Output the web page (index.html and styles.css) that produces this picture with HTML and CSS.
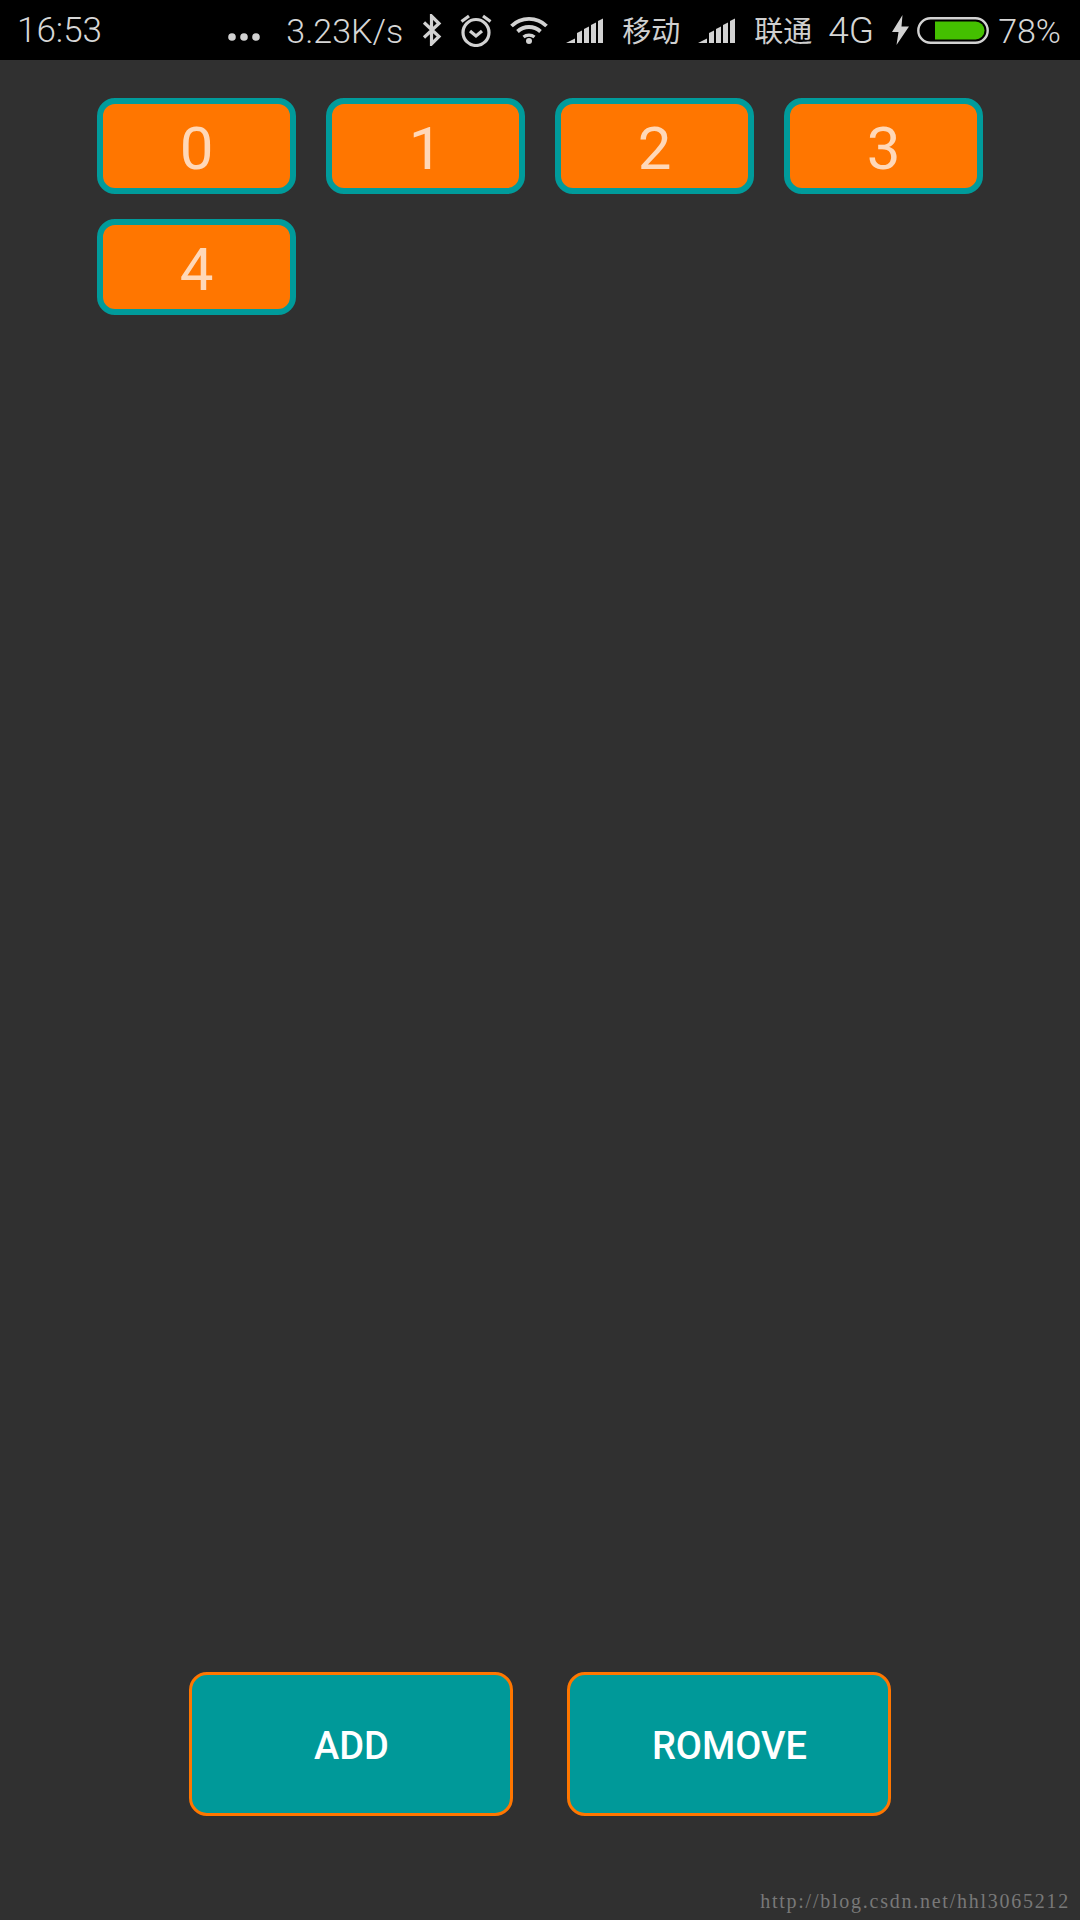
FILE: index.html
```html
<!DOCTYPE html>
<html lang="en">
<head>
    <meta charset="UTF-8">
    <meta name="viewport" content="width=device-width, initial-scale=1.0">
    <title>Flow Layout</title>
    <link rel="stylesheet" href="styles.css">
</head>
<body>

    <div id="appContainer">
        <!-- Status bar -->
        <div class="status-bar">
            <span class="status-text time">16:53</span>
            <div class="status-right">
                <svg class="icon dots" width="32" height="10" viewBox="0 0 32 10"><circle cx="4" cy="5" r="3.8"/><circle cx="16" cy="5" r="3.8"/><circle cx="28" cy="5" r="3.8"/></svg>
                <span class="status-text speed">3.23K/s</span>
                <svg class="icon bluetooth" width="20" height="32" viewBox="0 0 20 32"><path d="M2 8.5 L17 22.5 L9.5 30 V2 L17 9.5 L2 23.5" class="line"/></svg>
                <svg class="icon alarm" width="32" height="33" viewBox="0 0 32 33"><circle cx="16" cy="18.5" r="13" class="line"/><path d="M10 17 L16 22 L22 17" class="line"/><path d="M1.5 7.5 L9 2" class="line"/><path d="M30.5 7.5 L23 2" class="line"/></svg>
                <svg class="icon wifi" width="38" height="28" viewBox="0 0 38 28"><path d="M1.5 10 C11 0.5 27 0.5 36.5 10" class="line thick"/><path d="M7.5 15.5 C14 9.5 24 9.5 30.5 15.5" class="line thick"/><path d="M13.5 21 C16.5 18.5 21.5 18.5 24.5 21" class="line"/><circle cx="19" cy="25" r="3"/></svg>
                <svg class="icon signal" width="37" height="26" viewBox="0 0 37 26"><path d="M0 25 L9 20.5 V25 Z"/><path d="M11 25 V15 L16 12.5 V25 Z"/><path d="M18 25 V11 L23 8.5 V25 Z"/><path d="M25 25 V7 L30 4.5 V25 Z"/><path d="M32 25 V3 L37 0.5 V25 Z"/></svg>
                <span class="status-text carrier">移动</span>
                <svg class="icon signal" width="37" height="26" viewBox="0 0 37 26"><path d="M0 25 L9 20.5 V25 Z"/><path d="M11 25 V15 L16 12.5 V25 Z"/><path d="M18 25 V11 L23 8.5 V25 Z"/><path d="M25 25 V7 L30 4.5 V25 Z"/><path d="M32 25 V3 L37 0.5 V25 Z"/></svg>
                <span class="status-text carrier">联通</span>
                <span class="status-text net">4G</span>
                <svg class="icon bolt" width="17" height="30" viewBox="0 0 17 30"><path d="M10.5 0 L0 17 H6.5 L4.5 30 L17 11.5 H9.5 Z"/></svg>
                <svg class="icon battery" width="72" height="27" viewBox="0 0 72 27"><rect x="1.3" y="1.3" width="69.4" height="24.4" rx="12.2" class="battery-case"/><path d="M18 4.5 H58.5 A9 9 0 0 1 58.5 22.5 H18 Z" class="battery-fill"/></svg>
                <span class="status-text level">78%</span>
            </div>
        </div>

        <!-- Flow of tags -->
        <div class="tag-list">
            <div class="tag">0</div>
            <div class="tag">1</div>
            <div class="tag">2</div>
            <div class="tag">3</div>
            <div class="tag">4</div>
        </div>

        <!-- Bottom buttons -->
        <div class="button-row">
            <button class="button">ADD</button>
            <button class="button">ROMOVE</button>
        </div>

        <div class="watermark">http://blog.csdn.net/hhl3065212</div>
    </div>

</body>
</html>
```

FILE: styles.css
```css
html, body { margin: 0; padding: 0; }
body { background: #303030; font-family: Roboto, "Noto Sans CJK SC", sans-serif; }
#appContainer { position: relative; display: flex; flex-direction: column; width: 1080px; height: 1920px; overflow: hidden; }

.status-bar { display: flex; align-items: center; height: 60px; padding: 0 19px 0 17px; background: #000; color: #d6d6d6; flex: none; }
.status-right { display: flex; align-items: center; margin-left: auto; }
.status-text { margin-top: 2px; font-size: 34px; font-weight: 300; line-height: 60px; white-space: nowrap; }
.icon { display: block; flex: none; fill: #d2d2d2; }
.icon .line { fill: none; stroke: #d2d2d2; stroke-width: 3.2; stroke-linecap: butt; }
.icon .thick { stroke-width: 3.8; }
.time { font-size: 35px; }
.dots { margin-top: 14px; }
.speed { margin-left: 26px; }
.bluetooth { margin-left: 19px; }
.alarm { margin-left: 18px; }
.wifi { margin-left: 18px; }
.signal { margin-left: 18px; margin-top: 1px; }
.carrier { margin-left: 19px; margin-top: -2px; font-size: 29px; font-weight: 400; font-family: "Noto Sans CJK SC", sans-serif; color: #cfcfcf; }
.net { margin-left: 16px; font-size: 37px; }
.bolt { margin-left: 18px; }
.battery { margin-left: 8px; }
.battery-case { fill: none; stroke: #d2d2d2; stroke-width: 2.4; }
.battery-fill { fill: #44c000; }
.level { margin-left: 9px; }

.tag-list { display: flex; flex-wrap: wrap; gap: 25px 30px; padding: 38px 0 0 97px; }
.tag { box-sizing: border-box; width: 199px; height: 96px; border: 6px solid #009b9b; border-radius: 18px; background: #ff7600; color: #ffd8b8; font-size: 60px; line-height: 90px; text-align: center; }

.button-row { display: flex; justify-content: center; gap: 54px; margin-top: auto; margin-bottom: 104px; }
.button { box-sizing: border-box; width: 324px; height: 144px; padding: 4px 0 0 1px; border: 3px solid #ff7600; border-radius: 18px; background: #009999; color: #fff; font-family: Roboto, sans-serif; font-size: 38px; font-weight: 500; }

.watermark { position: absolute; right: 10px; bottom: 8px; color: #787878; font-family: "Liberation Serif", serif; font-size: 20px; letter-spacing: 1.75px; line-height: 22px; }
```
